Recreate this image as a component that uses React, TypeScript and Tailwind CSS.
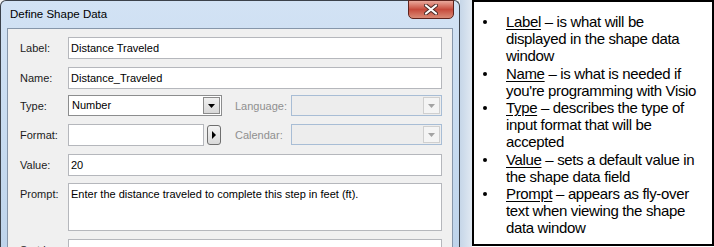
import React from "react";

const ui = { fontFamily: '"Liberation Sans", Arial, sans-serif' };

const Label = ({ text, dim }: { text: string; dim?: boolean }) => (
  <div className={`text-[11px] leading-[14px] ${dim ? "text-[#8f8f8f]" : "text-[#1b1b1b]"}`}>{text}</div>
);

const TextBox = ({ value, className = "" }: { value?: string; className?: string }) => (
  <div className={`h-[22px] border border-[#b5b7bc] bg-white pl-[2px] text-[11px] leading-[20px] text-black ${className}`}>
    {value}
  </div>
);

const DownArrow = ({ color }: { color: string }) => (
  <svg width="7" height="4" viewBox="0 0 7 4">
    <path d="M0 0h7L3.5 4z" fill={color} />
  </svg>
);

const DisabledSelect = () => (
  <div className="flex-1 h-[21px] flex border border-[#a8bdd5] bg-[#ededed] p-[1px]">
    <div className="flex-1" />
    <div className="w-[17px] flex items-center justify-center border border-[#cfcfcf] bg-[#f4f4f4]">
      <DownArrow color="#a3a3a3" />
    </div>
  </div>
);

const CloseButton = () => (
  <div className="ml-auto mt-[-1px] mr-[5px] w-[46px] h-[19px] rounded-b-[5px] border border-[#5e231d] bg-gradient-to-b from-[#e9a89c] via-[#c64a3c] to-[#d98a76] flex items-center justify-center">
    <svg width="14" height="11" viewBox="0 0 14 11">
      <path d="M2 1.5L12 9.5M12 1.5L2 9.5" stroke="#4a2a26" strokeWidth="4" strokeLinecap="round" />
      <path d="M2 1.5L12 9.5M12 1.5L2 9.5" stroke="#ffffff" strokeWidth="2.2" strokeLinecap="round" />
    </svg>
  </div>
);

const Ruler = () => (
  <svg width="460" height="3" className="block">
    {Array.from({ length: 14 }).map((_, i) => (
      <line key={i} x1={85.5 + i * 28.5} y1="0" x2={85.5 + i * 28.5} y2="3" stroke="#a7a7a7" strokeWidth="1" />
    ))}
  </svg>
);

const notes: { key: string; lines: string[] }[] = [
  { key: "Label", lines: [" \u2013 is what will be", "displayed in the shape data", "window"] },
  { key: "Name", lines: [" \u2013 is what is needed if", "you're programming with Visio"] },
  { key: "Type", lines: [" \u2013 describes the type of", "input format that will be", "accepted"] },
  { key: "Value", lines: [" \u2013 sets a default value in", "the shape data field"] },
  { key: "Prompt", lines: [" \u2013 appears as fly-over", "text when viewing the shape", "data window"] },
];

export default function App() {
  return (
    <div className="w-[714px] h-[247px] overflow-hidden bg-white flex" style={ui}>
      {/* dialog column */}
      <div className="w-[460px] flex flex-col bg-[#f3f3f3]">
        <Ruler />
        <div className="w-[460px] h-[280px] shrink-0 flex flex-col border border-b-0 border-[#3b414a] rounded-t-[6px] bg-gradient-to-b from-[#d2e2f4] via-[#c7dbf0] to-[#bcd2ea]">
          <div className="h-[27px] flex items-start">
            <span className="self-center pl-[9px] text-[11.5px] text-black">Define Shape Data</span>
            <CloseButton />
          </div>
          <div className="mx-[6px] flex-1 border border-[#8696aa] bg-[#f0f0f0] pl-[12px] pr-[10px] pt-[8px] flex flex-col">
            <div className="flex items-center">
              <div className="w-[48px]"><Label text="Label:" /></div>
              <TextBox value="Distance Traveled" className="flex-1" />
            </div>
            <div className="flex items-center mt-[8px]">
              <div className="w-[48px]"><Label text="Name:" /></div>
              <TextBox value="Distance_Traveled" className="flex-1" />
            </div>
            <div className="flex items-center mt-[6px]">
              <div className="w-[48px]"><Label text="Type:" /></div>
              <div className="w-[154px] h-[21px] flex border border-[#8c8d8e] bg-white p-[1px]">
                <div className="flex-1 pl-[2px] text-[11px] leading-[17px] text-black">Number</div>
                <div className="w-[17px] flex items-center justify-center border border-[#8a8a8a] bg-gradient-to-b from-[#f0f0f0] to-[#d8d8d8]">
                  <DownArrow color="#000000" />
                </div>
              </div>
              <div className="ml-[13px] w-[56px]"><Label text="Language:" dim /></div>
              <DisabledSelect />
            </div>
            <div className="flex items-center mt-[7px]">
              <div className="w-[48px]"><Label text="Format:" /></div>
              <TextBox className="w-[136px] mt-[1px]" />
              <div className="ml-[3px] mt-[1px] w-[14px] h-[20px] rounded-[3px] border border-[#6f6f6f] bg-gradient-to-b from-[#f4f4f4] to-[#d9d9d9] flex items-center justify-center">
                <svg width="4" height="8" viewBox="0 0 4 8">
                  <path d="M0 0L4 4L0 8z" fill="#000000" />
                </svg>
              </div>
              <div className="ml-[14px] w-[56px]"><Label text="Calendar:" dim /></div>
              <DisabledSelect />
            </div>
            <div className="flex items-center mt-[8px]">
              <div className="w-[48px]"><Label text="Value:" /></div>
              <TextBox value="20" className="flex-1" />
            </div>
            <div className="flex items-start mt-[7px]">
              <div className="w-[48px] pt-[4px]"><Label text="Prompt:" /></div>
              <div className="flex-1 h-[48px] border border-[#b5b7bc] bg-white pl-[2px] pt-[3px] text-[11px] leading-[14px] text-black">
                Enter the distance traveled to complete this step in feet (ft).
              </div>
            </div>
            <div className="flex items-start mt-[8px]">
              <div className="w-[48px] pt-[4px]"><Label text="Sort key:" /></div>
              <TextBox className="flex-1" />
            </div>
          </div>
        </div>
      </div>

      {/* gap showing the window behind */}
      <div className="w-[12px] h-[247px] bg-gradient-to-r from-[#c6d6e8] to-[#e1e9f2]" />

      {/* notes box */}
      <div className="w-[242px] h-[246px] border-2 border-black bg-white pt-[11px]">
        <ul className="text-[15px] leading-[17.2px] tracking-[-0.35px] text-black">
          {notes.map((n) => (
            <li key={n.key} className="flex">
              <div className="w-[32px] shrink-0 flex justify-start pl-[9px] pt-[7px]">
                <span className="block w-[4px] h-[4px] rounded-full bg-black" />
              </div>
              <div>
                <div>
                  <span className="underline underline-offset-[2px]">{n.key}</span>
                  {n.lines[0]}
                </div>
                {n.lines.slice(1).map((l) => (
                  <div key={l}>{l}</div>
                ))}
              </div>
            </li>
          ))}
        </ul>
      </div>
    </div>
  );
}
